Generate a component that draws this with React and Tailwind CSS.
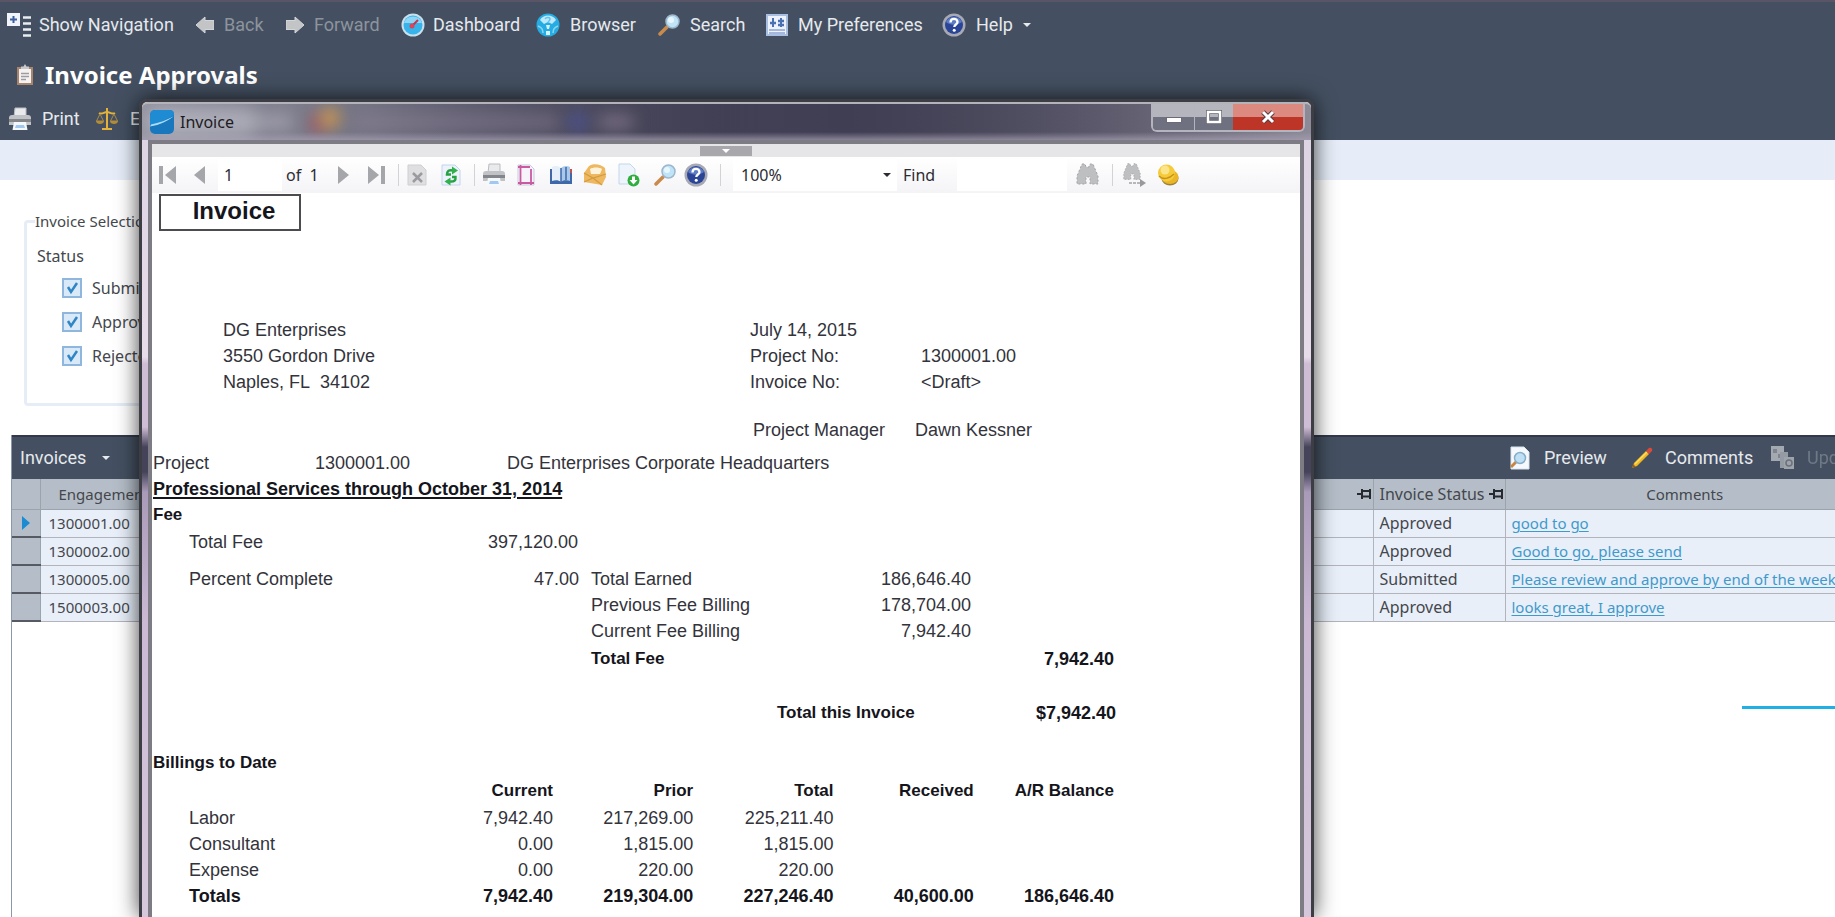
const invoices = [
  { id: "1300001.00", status: "Approved", comment: "good to go", current: true },
  { id: "1300002.00", status: "Approved", comment: "Good to go, please send" },
  { id: "1300005.00", status: "Submitted", comment: "Please review and approve by end of the week" },
  { id: "1500003.00", status: "Approved", comment: "looks great, I approve" },
]

const billings = [
  ["Labor", "7,942.40", "217,269.00", "225,211.40", "", ""],
  ["Consultant", "0.00", "1,815.00", "1,815.00", "", ""],
  ["Expense", "0.00", "220.00", "220.00", "", ""],
]

/* ---------- icons ---------- */

function Svg({ children, className = "size-6", box = "0 0 24 24" }) {
  return (
    <svg viewBox={box} className={`shrink-0 ${className}`} fill="none" aria-hidden="true">
      {children}
    </svg>
  )
}

const NavIcon = () => (
  <Svg>
    <rect x="0" y="0" width="13" height="13" fill="#f1f5fb" />
    <path d="M6.500 3v7M3 6.500h7" stroke="#3c5f9e" strokeWidth="2" />
    <path d="M16 4.500h8M16 10.500h8M16 16.500h8M16 22.500h8" stroke="#e9ecf0" strokeWidth="2.500" />
  </Svg>
)

const ArrowIcon = ({ flip }) => (
  <Svg className="h-5 w-[18px]" box="0 0 18 20">
    <path
      d="M0 10 9 2v3.500h9v9H9V18z"
      fill="#c3c4c6"
      stroke="#d3d5d8"
      transform={flip ? "translate(18 0) scale(-1 1)" : undefined}
    />
  </Svg>
)

const GaugeIcon = () => (
  <Svg>
    <circle cx="12" cy="12" r="11.500" fill="#c8dfee" />
    <circle cx="12" cy="12" r="9.500" fill="#35b3ea" />
    <path d="M3 10a9.500 9.500 0 0 1 18 0z" fill="#8fd5f5" />
    <path d="m11 13 6-6" stroke="#c8324a" strokeWidth="2" />
    <circle cx="11" cy="13" r="2.500" fill="#d6465c" />
  </Svg>
)

const GlobeIcon = () => (
  <Svg>
    <circle cx="12" cy="12" r="11.500" fill="#25ace3" />
    <path d="M4 7c3-6 13-6 16 0l-4 4-4-2-4 2z" fill="#bfe9fb" />
    <path d="M9 6c1-2 5-2 5 0s-2 2-2 4" stroke="#5fc4ee" strokeWidth="1.500" />
    <path d="M10 12h4l-1 4h-2zM10 18h4v4h-4z" fill="#d8f3fd" />
    <path d="M2 13c3 1 5 3 5 7M22 13c-3 1-5 3-5 7" stroke="#8ad4f2" strokeWidth="1.500" />
  </Svg>
)

const SearchIcon = () => (
  <Svg className="size-[22px]" box="0 0 22 22">
    <path d="m2 20 7-7" stroke="#c98a4b" strokeWidth="3.500" strokeLinecap="round" />
    <circle cx="14.500" cy="7.500" r="6.500" fill="#bfe4f7" stroke="#9db7cc" strokeWidth="1.500" />
    <circle cx="13" cy="6" r="3" fill="#e8f7fd" />
  </Svg>
)

const PrefsIcon = () => (
  <Svg className="size-[22px]" box="0 0 22 22">
    <rect x="1" y="1" width="20" height="20" fill="#eef3fb" stroke="#a9bfe2" strokeWidth="2" />
    <path d="M7 4v9M15 4v9" stroke="#4a70b5" strokeWidth="2" />
    <path d="M4 9h6M12 7h6M12 11h6" stroke="#4a70b5" strokeWidth="2.500" />
    <path d="M3 16h16M3 19h16" stroke="#8ba5d2" strokeWidth="1.500" />
  </Svg>
)

const HelpIcon = () => (
  <Svg>
    <circle cx="12" cy="12" r="11.500" fill="#a7a9b4" />
    <circle cx="12" cy="12" r="9" fill="#2b4596" />
    <path d="M4 9a9 9 0 0 1 16 0c-4 3-11 4-16 0z" fill="#5d7cc4" />
    <path d="M8.500 9.500c0-5 7-4.500 7-.5 0 2.500-3.200 2.500-3.200 5" stroke="#fff" strokeWidth="2.300" />
    <circle cx="12.200" cy="17.200" r="1.500" fill="#fff" />
  </Svg>
)

const ClipboardIcon = () => (
  <Svg className="h-[22px] w-4" box="0 0 16 22">
    <rect x="0" y="3" width="16" height="18" fill="#a7846b" />
    <rect x="2" y="5" width="12" height="14" fill="#f4f2f0" />
    <path d="M4 5V2.500h2.500L8 0l1.500 2.500H12V5z" fill="#c9c9cc" />
    <path d="M4 9.500h8M4 12.500h8M4 15.500h5" stroke="#9c9ca0" strokeWidth="1.300" />
  </Svg>
)

const PrinterIcon = () => (
  <Svg>
    <path d="M7 1h11v9H6z" fill="#e9eaec" stroke="#b9bcc2" />
    <path d="M1 11c0-2 1-3 3-3h16c2 0 3 1 3 3v7H1z" fill="#c0c2c5" />
    <path d="M1 12h22v3H1z" fill="#82858a" />
    <path d="M6 15h12l1.500 8h-15z" fill="#f5f8fc" />
    <path d="M8 18h8l1 3H7z" fill="#a3c8ef" />
  </Svg>
)

const ScalesIcon = () => (
  <Svg className="size-[22px]" box="0 0 22 22">
    <path d="M11 0v20M6 21h10M3 5c3 2 5-1 8-1s5 3 8 1" stroke="#e2b23a" strokeWidth="2" />
    <path d="m4 6-3.500 7h7zM18 6l-3.500 7h7z" stroke="#a98a45" />
    <path d="M0 13h8c0 4-8 4-8 0zM14 13h8c0 4-8 4-8 0z" fill="#b58d34" />
  </Svg>
)

const AppIcon = () => (
  <Svg>
    <rect width="24" height="24" rx="5" fill="#1877bd" />
    <path d="M0 15C8 14 16 10 24 5v-1a4 4 0 0 0-4-4H5a5 5 0 0 0-5 5z" fill="#1e8bd3" />
    <path d="M1 14.500C9 13 17 10 24 6c-6 5-14 9-24 10.500z" fill="#a9dcf7" />
  </Svg>
)

const PreviewIcon = () => (
  <Svg className="h-6 w-5" box="0 0 20 24">
    <path d="M1 1h13l5 5v17H1z" fill="#f5f9fd" stroke="#d6e2ee" />
    <path d="m1 21 5-5" stroke="#c8863f" strokeWidth="3" />
    <circle cx="10" cy="12" r="5.500" fill="#bfe0f4" stroke="#86aeca" strokeWidth="1.500" />
  </Svg>
)

const PencilIcon = () => (
  <Svg className="size-[22px]" box="0 0 22 22">
    <path d="m1 21 2-5L15 4l3 3L6 19z" fill="#f3b81f" />
    <path d="m4 17 12-12" stroke="#fbdc6a" strokeWidth="1.500" />
    <path d="m1 21 1-4 3 3z" fill="#8d5f2a" />
    <path d="m15 4 3-3c2-1 4 1 3 3l-3 3z" fill="#dc4a3a" />
  </Svg>
)

const UpdateIcon = () => (
  <Svg>
    <path d="M0 0h13v15H0z" fill="#e4e5e6" />
    <path d="M2 3h4v4H2zM7 8h4v4H7z" fill="#a6a9ae" />
    <path d="M9 6h8v16H9z" fill="#cccdcf" />
    <path d="M13 11h10v12H13z" fill="#dcdddf" />
    <circle cx="18" cy="17" r="3" stroke="#84888e" strokeWidth="1.500" />
  </Svg>
)

const PinIcon = () => (
  <Svg className="h-3 w-[14px]" box="0 0 14 12">
    <path d="M0 6h5M5 1v10M5 3h8v5.500H5M13 1v10" stroke="#26292d" strokeWidth="2" />
  </Svg>
)

const FirstIcon = ({ flip }) => (
  <Svg className="h-5 w-[19px]" box="0 0 19 20">
    <g fill="#a5a6a9" transform={flip ? "translate(19 0) scale(-1 1)" : undefined}>
      <path d="M1 1h4v18H1zM18 1v18L7 10z" />
    </g>
  </Svg>
)

const StepIcon = ({ flip }) => (
  <Svg className="h-5 w-3" box="0 0 12 20">
    <path d="M11 1v18L0 10z" fill="#a5a6a9" transform={flip ? "translate(12 0) scale(-1 1)" : undefined} />
  </Svg>
)

const StopIcon = () => (
  <Svg className="h-[22px] w-5" box="0 0 20 22">
    <path d="M1 1h13l5 5v15H1z" fill="#dfdfe1" stroke="#cfcfd2" />
    <path d="m6 9 9 9M15 9l-9 9" stroke="#9b9b9f" strokeWidth="2.500" />
  </Svg>
)

const RefreshIcon = () => (
  <Svg className="h-[22px] w-5" box="0 0 20 22">
    <path d="M1 1h13l5 5v15H1z" fill="#edf3fb" stroke="#c3d4ec" />
    <path d="M12 6.500C8 5.500 6 7 6 10.500h4" stroke="#27a243" strokeWidth="2.500" />
    <path d="M9 17.500c4 .5 6-1 5.500-4.500H11" stroke="#27a243" strokeWidth="2.500" />
    <path d="m11 2.500 6 4-6 4zM9.500 13.500l-6 4 6 4z" fill="#32b04d" />
  </Svg>
)

const LayoutIcon = () => (
  <Svg className="h-[22px] w-[18px]" box="0 0 18 22">
    <path d="M1 1h12l4 4v16H1z" fill="#f6f4fa" stroke="#c9cbe0" />
    <path d="M3.500 1v20M14 5v16M1 3h12M1 19h16" stroke="#c95aa0" strokeWidth="1.800" />
  </Svg>
)

const BookIcon = () => (
  <Svg className="h-5 w-6" box="0 0 24 20">
    <path d="M1 4h22v15H1z" fill="#3e68a8" />
    <path d="M3 2c3-2 7-1 9 1v14c-2-2-6-2-9-1z" fill="#e4effa" />
    <path d="M21 2c-3-2-7-1-9 1v14c2-2 6-2 9-1z" fill="#a9c8ea" />
    <path d="M12 3v14M17 2v13" stroke="#3e68a8" strokeWidth="1.500" />
    <path d="M21 4h2v4h-2z" fill="#c9504a" />
  </Svg>
)

const MailIcon = () => (
  <Svg className="h-[22px] w-6" box="0 0 24 22">
    <path d="M1 9 6 2c4-3 12-2 16 2l1 9-4 8-18-3z" fill="#edb85f" />
    <path d="M7 5c3-2 9-2 12 0l-2 5H8z" fill="#fdf3dc" />
    <path d="m1 9 9 5 13-4M1 18l9-4 9 7" stroke="#d59a40" strokeWidth="1.300" />
  </Svg>
)

const ExportIcon = () => (
  <Svg className="h-6 w-[22px]" box="0 0 22 24">
    <path d="M1 1h11l5 5v15H1z" fill="#eef4fb" stroke="#c5d5ea" />
    <circle cx="15.500" cy="17.500" r="6" fill="#2fae3e" />
    <path d="M14 13.500h3V17h2.500l-4 4.500-4-4.500H14z" fill="#fff" />
  </Svg>
)

const Binoculars = () => (
  <path
    d="M6 1h3l1 3h3l1-3h3l5 12v8h-8v-7h-4v7H1v-8z"
    fill="#bebfc1"
    stroke="#a3a4a8"
    strokeDasharray="2 2"
  />
)

const FindIcon = () => (
  <Svg>
    <Binoculars />
  </Svg>
)

const FindNextIcon = () => (
  <Svg>
    <g transform="scale(.78)">
      <Binoculars />
    </g>
    <path d="M6 20h13" stroke="#a2a3a7" strokeWidth="1.500" strokeDasharray="3 1" />
    <path d="m17 16 6 4-6 4z" fill="#98999d" />
  </Svg>
)

const BallIcon = () => (
  <Svg className="size-[22px]" box="0 0 22 22">
    <ellipse cx="13" cy="14.500" rx="8.500" ry="7" fill="#9a8338" />
    <ellipse cx="13" cy="13" rx="8.500" ry="7" fill="#eab526" />
    <circle cx="9.500" cy="9" r="8.500" fill="#f5cb3a" />
    <circle cx="8" cy="6" r="4.500" fill="#fbe48a" />
    <path d="M2 12c4 4 10 3 15-2" stroke="#c8921a" strokeWidth="1.500" />
  </Svg>
)

const Caret = ({ className = "" }) => (
  <Svg className={`h-1 w-2 ${className}`} box="0 0 8 4">
    <path d="M0 0h8L4 4z" fill="currentColor" />
  </Svg>
)

/* ---------- main page ---------- */

function BarButton({ icon, label, className = "", disabled, menu }) {
  return (
    <button
      type="button"
      disabled={disabled}
      className={`flex shrink-0 items-center font-['Roboto',sans-serif] text-[18px] leading-6 whitespace-nowrap ${
        disabled ? "text-[#8d949d]" : "text-[#e6e9ed]"
      } ${className}`}
    >
      {icon}
      <span>{label}</span>
      {menu && <Caret />}
    </button>
  )
}

function PageHeader() {
  return (
    <header className="h-[140px] border-t-2 border-[#5a5566] bg-[#445061]">
      <nav className="flex h-[46px] items-center pl-[7px]">
        <BarButton icon={<NavIcon />} label="Show Navigation" className="w-[189px] gap-2" />
        <BarButton icon={<ArrowIcon />} label="Back" className="w-[90px] gap-2.5" disabled />
        <BarButton icon={<ArrowIcon flip />} label="Forward" className="w-[115px] gap-2.5" disabled />
        <BarButton icon={<GaugeIcon />} label="Dashboard" className="w-[135px] gap-2" />
        <BarButton icon={<GlobeIcon />} label="Browser" className="w-[122px] gap-2.5" />
        <BarButton icon={<SearchIcon />} label="Search" className="w-[108px] gap-2.5" />
        <BarButton icon={<PrefsIcon />} label="My Preferences" className="w-[176px] gap-2.5" />
        <BarButton icon={<HelpIcon />} label="Help" className="gap-2.5" menu />
      </nav>
      <div className="flex h-[54px] items-center gap-3 pl-[17px]">
        <ClipboardIcon />
        <h1 className="font-['Noto_Sans',sans-serif] text-[24px] leading-8 font-bold text-white">Invoice Approvals</h1>
      </div>
      <div className="flex h-[34px] items-center pl-2">
        <BarButton icon={<PrinterIcon />} label="Print" className="w-[88px] gap-2.5" />
        <BarButton icon={<ScalesIcon />} label="Export" className="gap-3" />
      </div>
    </header>
  )
}

function StatusCheck({ label }) {
  return (
    <label className="flex h-[34px] items-center gap-2.5 text-[16px]">
      <span className="grid">
        <input
          type="checkbox"
          defaultChecked
          className="peer col-start-1 row-start-1 size-5 appearance-none border-2 border-[#8fb6dc] bg-[#d9e9f7]"
        />
        <svg
          viewBox="0 0 20 20"
          className="pointer-events-none invisible col-start-1 row-start-1 size-5 peer-checked:visible"
          fill="none"
        >
          <path d="m6 9 3 5 6-9" stroke="#2f86c6" strokeWidth="2.500" />
        </svg>
      </span>
      {label}
    </label>
  )
}

function InvoiceGrid() {
  return (
    <section className="ml-[11px] grow overflow-hidden border-l border-[#8b98a8]">
      <div className="flex h-11 items-center justify-between border-t-2 border-[#33394a] bg-[#445061]">
        <button
          type="button"
          className="flex items-center gap-4 pl-2 font-['Roboto',sans-serif] text-[18px] text-[#e6e9ed]"
        >
          Invoices
          <Caret />
        </button>
        <div className="-mr-[31px] flex">
          <BarButton icon={<PreviewIcon />} label="Preview" className="w-[121px] gap-3.5" />
          <BarButton icon={<PencilIcon />} label="Comments" className="w-[140px] gap-3" />
          <div className="flex w-[95px] opacity-60">
            <BarButton icon={<UpdateIcon />} label="Update" className="gap-3" disabled />
          </div>
        </div>
      </div>
      <table className="w-[calc(100%+29px)] table-fixed border-collapse text-left text-[#44474c]">
        <colgroup>
          <col className="w-7" />
          <col className="w-[140px]" />
          <col />
          <col className="w-[132px]" />
          <col className="w-[359px]" />
        </colgroup>
        <thead>
          <tr className="h-[30px] border-b border-[#9ba3ad] bg-[#b5bec8]">
            <th className="border-r border-[#9ba3ad]" />
            <th className="pl-[18px] font-normal">Engagement</th>
            <th>
              <div className="flex justify-end pr-0.5">
                <PinIcon />
              </div>
            </th>
            <th className="border-x border-[#9ba3ad] font-normal">
              <div className="flex items-center justify-between pr-0.5 pl-1.5 text-[16px] whitespace-nowrap">
                Invoice Status
                <PinIcon />
              </div>
            </th>
            <th className="text-center font-normal">Comments</th>
          </tr>
        </thead>
        <tbody>
          {invoices.map((row) => (
            <tr key={row.id} className="h-7 border-b border-[#b3b4bb] bg-[#e8eff9]">
              <td className="border-r border-b-2 border-r-[#9ba3ad] border-b-[#565b63] bg-[#b5bec8]">
                {row.current && (
                  <svg viewBox="0 0 8 14" className="ml-2.5 h-3.5 w-2">
                    <path d="M0 0l8 7-8 7z" fill="#1d8bd1" />
                  </svg>
                )}
              </td>
              <td className="pl-2">{row.id}</td>
              <td />
              <td className="border-x border-[#b3b4bb] pl-1.5 text-[16px]">{row.status}</td>
              <td className="pl-1.5 whitespace-nowrap">
                <a href="#comment" className="text-[#3f9acb] underline underline-offset-2">
                  {row.comment}
                </a>
              </td>
            </tr>
          ))}
        </tbody>
      </table>
      <div className="mt-[84px] ml-auto h-[3px] w-[93px] bg-[#1fb0e6]" />
    </section>
  )
}

/* ---------- invoice window ---------- */

function Separator({ className = "" }) {
  return <span className={`h-[22px] w-px bg-[#d3d3d6] ${className}`} />
}

function IconButton({ icon, label, className = "" }) {
  return (
    <button type="button" aria-label={label} className={`flex shrink-0 ${className}`}>
      {icon}
    </button>
  )
}

function TitleBar() {
  return (
    <div className="relative flex h-[38px] items-start justify-between overflow-hidden rounded-t-md border-t-2 border-[#b3b3bb] bg-linear-to-r from-[#9293a0] via-[#454357] to-[#8d8b98]">
      {/* toolbar seen through the glass */}
      <div className="absolute inset-0 bg-linear-to-r from-transparent from-20% via-[#403e52] via-60% to-transparent" />
      <div className="absolute top-3 left-28 h-3 w-10 rounded-full bg-[#c9c4d0]/50 blur-sm" />
      <div className="absolute top-3 left-[168px] size-4 rounded-full bg-[#a8505a] blur-sm" />
      <div className="absolute top-1 left-[178px] size-5 rounded-full bg-[#d09a4c] blur-sm" />
      <div className="absolute top-3 left-[210px] h-3 w-52 rounded-full bg-[#8d7f95]/60 blur-sm" />
      <div className="absolute top-2 left-[426px] size-5 rounded-full bg-[#4c5290] blur-sm" />
      <div className="absolute top-3 left-[456px] h-3 w-9 rounded-full bg-[#8d7f95]/80 blur-sm" />
      <div className="absolute inset-x-0 bottom-0 h-2 bg-linear-to-b from-transparent to-[#a79fb3]/70" />
      <div className="absolute top-1 left-1 h-7 w-28 rounded-full bg-[#c4c4cf]/60 blur-sm" />
      <div className="relative flex items-center gap-1.5 pt-1.5 pl-2 font-['Noto_Sans',sans-serif] text-[16px] leading-6 text-[#1c1c22]">
        <AppIcon />
        Invoice
      </div>
      <div className="relative mr-1.5 flex h-7 overflow-hidden rounded-b-md border-2 border-t-0 border-[#b4b3be]">
        <button
          type="button"
          aria-label="Minimize"
          className="flex w-[42px] items-center justify-center border-r border-[#b4b3be] bg-linear-to-b from-[#b5b5be] from-50% to-[#6f7080] to-50%"
        >
          <svg viewBox="0 0 16 6" className="mt-1.5 h-1.5 w-4">
            <rect x=".5" y=".5" width="15" height="5" fill="#fff" stroke="#6b6b78" />
          </svg>
        </button>
        <button
          type="button"
          aria-label="Maximize"
          className="flex w-[38px] items-center justify-center bg-linear-to-b from-[#b5b5be] from-50% to-[#6f7080] to-50%"
        >
          <svg viewBox="0 0 16 14" className="h-3.5 w-4" fill="none">
            <rect x="2" y="2" width="12" height="10" stroke="#64646f" strokeWidth="4" />
            <rect x="2" y="2" width="12" height="10" stroke="#fff" strokeWidth="2.500" />
          </svg>
        </button>
        <button
          type="button"
          aria-label="Close"
          className="flex w-[70px] items-center justify-center bg-linear-to-b from-[#dc8a80] from-50% to-[#bc3526] to-50%"
        >
          <svg viewBox="0 0 16 14" className="h-3.5 w-4" fill="none">
            <path d="m3 2 10 10M13 2 3 12" stroke="#5f3a40" strokeWidth="5" />
            <path d="m3 2 10 10M13 2 3 12" stroke="#fff" strokeWidth="3" />
          </svg>
        </button>
      </div>
    </div>
  )
}

function ReportToolbar() {
  return (
    <div className="flex h-9 items-center bg-linear-to-b from-white to-[#f4f4f7] pl-1.5 font-['Noto_Sans',sans-serif] text-[16px] text-[#2c2c33]">
      <IconButton icon={<FirstIcon />} label="First page" className="w-9" />
      <IconButton icon={<StepIcon />} label="Previous page" className="w-6" />
      <input
        aria-label="Page"
        defaultValue="1"
        className="h-8 w-16 bg-white pl-1.5"
      />
      <span className="w-[55px] pl-1 whitespace-nowrap">of&nbsp; 1</span>
      <IconButton icon={<StepIcon flip />} label="Next page" className="w-[30px]" />
      <IconButton icon={<FirstIcon flip />} label="Last page" className="w-[31px]" />
      <Separator />
      <IconButton icon={<StopIcon />} label="Stop" className="w-[42px] pl-2" />
      <IconButton icon={<RefreshIcon />} label="Refresh" className="w-[33px]" />
      <Separator />
      <IconButton icon={<PrinterIcon />} label="Print" className="w-[42px] pl-[7px]" />
      <IconButton icon={<LayoutIcon />} label="Print layout" className="w-8" />
      <IconButton icon={<BookIcon />} label="Page setup" className="w-[34px]" />
      <IconButton icon={<MailIcon />} label="Send" className="w-[35px]" />
      <IconButton icon={<ExportIcon />} label="Export" className="w-9" />
      <IconButton icon={<SearchIcon />} label="Search" className="w-[30px]" />
      <IconButton icon={<HelpIcon />} label="Help" className="w-9" />
      <Separator />
      <div className="ml-3 flex h-8 w-[164px] items-center bg-white">
        <select aria-label="Zoom" defaultValue="100" className="grow appearance-none pl-2">
          <option value="100">100%</option>
          <option value="150">150%</option>
        </select>
        <Caret className="mr-1.5" />
      </div>
      <button type="button" className="w-[60px] pl-1.5 text-left">
        Find
      </button>
      <input aria-label="Find text" className="h-8 w-[110px] min-w-0 bg-white" />
      <IconButton icon={<FindIcon />} label="Find" className="w-[45px] pl-[9px]" />
      <Separator />
      <IconButton icon={<FindNextIcon />} label="Find next" className="w-11 pl-2.5" />
      <IconButton icon={<BallIcon />} label="Options" />
    </div>
  )
}

function Report() {
  return (
    <div className="grow bg-white font-['Liberation_Sans',Arial,sans-serif] text-[18px] leading-[26px] text-[#33333b]">
      <h2 className="mt-px ml-[7px] h-[37px] w-[142px] border-2 border-[#4c4c50] pl-2 text-center text-[24px] leading-[30px] font-bold text-[#15151c]">
        Invoice
      </h2>

      <div className="mt-[86px] flex">
        <address className="w-[526px] pl-[71px] not-italic">
          DG Enterprises
          <br />
          3550 Gordon Drive
          <br />
          Naples, FL&nbsp; 34102
        </address>
        <dl className="grid grid-cols-[171px_auto] pl-[72px]">
          <dt className="col-span-2">July 14, 2015</dt>
          <dt>Project No:</dt>
          <dd>1300001.00</dd>
          <dt>Invoice No:</dt>
          <dd>&lt;Draft&gt;</dd>
        </dl>
      </div>
      <div className="mt-[22px] flex pl-[601px]">
        <span className="w-[162px]">Project Manager</span>
        <span>Dawn Kessner</span>
      </div>
      <div className="mt-[7px] flex pl-px">
        <span className="w-[162px]">Project</span>
        <span className="w-[192px]">1300001.00</span>
        <span>DG Enterprises Corporate Headquarters</span>
      </div>
      <h3 className="pl-px font-bold text-[#15151c] underline decoration-2 underline-offset-2">
        Professional Services through October 31, 2014
      </h3>
      <h3 className="pl-px text-[17px] font-bold text-[#15151c]">Fee</h3>

      <table className="w-[964px] table-fixed">
        <colgroup>
          <col className="w-[260px]" />
          <col className="w-[167px]" />
          <col className="w-[187px]" />
          <col className="w-[207px]" />
          <col className="w-[143px]" />
        </colgroup>
        <tbody>
          <tr className="h-7">
            <td className="pl-[37px]">Total Fee</td>
            <td className="pr-px text-right">397,120.00</td>
          </tr>
          <tr className="h-9 align-bottom">
            <td className="pl-[37px]">Percent Complete</td>
            <td className="text-right">47.00</td>
            <td className="pl-3">Total Earned</td>
            <td className="pr-0.5 text-right">186,646.40</td>
          </tr>
          <tr>
            <td colSpan="2" />
            <td className="pl-3">Previous Fee Billing</td>
            <td className="pr-0.5 text-right">178,704.00</td>
          </tr>
          <tr>
            <td colSpan="2" />
            <td className="pl-3">Current Fee Billing</td>
            <td className="pr-0.5 text-right">7,942.40</td>
          </tr>
          <tr className="h-7 align-bottom font-bold text-[#15151c]">
            <td colSpan="2" />
            <td className="pl-3 text-[17px]">Total Fee</td>
            <td />
            <td className="pr-0.5 text-right">7,942.40</td>
          </tr>
          <tr className="h-[54px] align-bottom font-bold text-[#15151c]">
            <td colSpan="2" />
            <td colSpan="2" className="pl-[198px] text-[17px]">
              Total this Invoice
            </td>
            <td className="text-right">$7,942.40</td>
          </tr>
        </tbody>
      </table>

      <h3 className="mt-6 pl-px text-[17px] font-bold text-[#15151c]">Billings to Date</h3>
      <table className="mb-2 w-[962px] table-fixed">
        <thead className="text-[17px] text-[#15151c]">
          <tr className="h-[29px]">
            <th className="w-[261px]" />
            <th className="w-[140px] text-right">Current</th>
            <th className="text-right">Prior</th>
            <th className="text-right">Total</th>
            <th className="text-right">Received</th>
            <th className="text-right">A/R Balance</th>
          </tr>
        </thead>
        <tbody>
          {billings.map(([name, ...amounts]) => (
            <tr key={name}>
              <td className="pl-[37px]">{name}</td>
              {amounts.map((amount, i) => (
                <td key={i} className="text-right">
                  {amount}
                </td>
              ))}
            </tr>
          ))}
          <tr className="font-bold text-[#15151c]">
            <td className="pl-[37px]">Totals</td>
            <td className="text-right">7,942.40</td>
            <td className="text-right">219,304.00</td>
            <td className="text-right">227,246.40</td>
            <td className="text-right">40,600.00</td>
            <td className="text-right">186,646.40</td>
          </tr>
        </tbody>
      </table>
    </div>
  )
}

function InvoiceWindow() {
  return (
    <div
      role="dialog"
      aria-label="Invoice"
      className="z-10 col-start-1 row-start-1 mt-[99px] ml-[139px] flex w-[1175px] flex-col rounded-t-lg border-3 border-b-0 border-[#3d3e44] bg-[linear-gradient(#dcd3e2_0px,#e6dcea_255px,#cfbcd5_262px,#cfbcd5_325px,#45435a_345px,#45435a_370px,#a99ab8_390px,#cbb9d4_520px,#d6c8dc_100%)] shadow-[0_0_22px_rgba(0,0,0,0.75)]"
    >
      <TitleBar />
      <div className="mr-[7px] ml-[6px] flex grow flex-col border-4 border-b-0 border-[#7d7b84]">
        <div className="flex h-[13px] justify-center bg-[#e6e5e8]">
          <button
            type="button"
            aria-label="Collapse toolbar"
            className="mt-0.5 flex h-2.5 w-[52px] items-center justify-center bg-[#a8a8ac] text-white"
          >
            <Caret />
          </button>
        </div>
        <ReportToolbar />
        <Report />
      </div>
    </div>
  )
}

export default function App() {
  return (
    <div className="grid min-h-screen overflow-hidden bg-white">
      <main className="col-start-1 row-start-1 flex min-w-0 flex-col font-['Noto_Sans',sans-serif] text-[15px] leading-5 text-[#44474c]">
        <PageHeader />
        <div className="h-10 bg-[#e6edf8]" />
        <fieldset className="mt-[31px] ml-6 h-[195px] w-[400px] rounded border-3 border-[#e6edf6] pl-2">
          <legend className="pr-0.5">Invoice Selection</legend>
          <p className="mt-[15px] mb-[5px] pl-0.5 text-[16px]">Status</p>
          <div className="pl-[27px]">
            <StatusCheck label="Submitted" />
            <StatusCheck label="Approved" />
            <StatusCheck label="Rejected" />
          </div>
        </fieldset>
        <div className="h-[29px]" />
        <InvoiceGrid />
      </main>
      <InvoiceWindow />
    </div>
  )
}
